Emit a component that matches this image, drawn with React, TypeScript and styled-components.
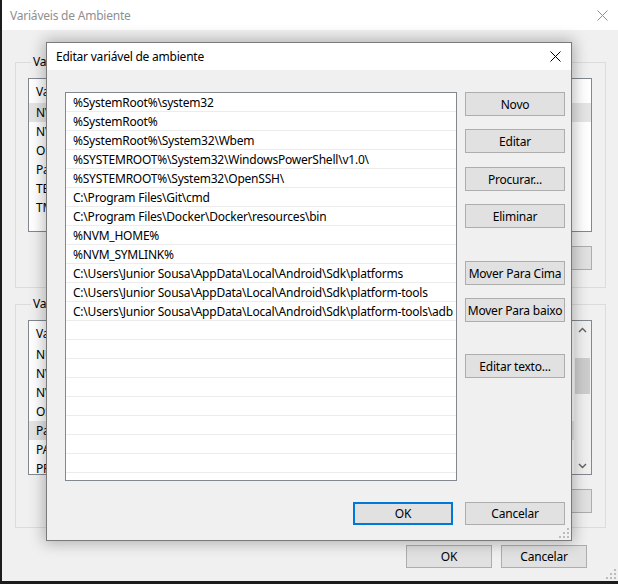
import React from 'react';
import styled, { createGlobalStyle } from 'styled-components';

const Global = createGlobalStyle`
  html, body { margin: 0; padding: 0; }
  body {
    background: #1c1c1c;
    width: 618px;
    height: 584px;
    overflow: hidden;
    font-family: "Noto Sans", "Open Sans", sans-serif;
    font-size: 12px;
    letter-spacing: -0.22px;
    color: #000;
  }
  * { box-sizing: border-box; }
`;

const Page = styled.div`
  position: relative;
  width: 618px;
  height: 584px;
  padding-left: 2px;
`;

const Window = styled.div`
  width: 616px;
  height: 581px;
  background: #f0f0f0;
  display: flex;
  flex-direction: column;
  position: relative;
`;

const TitleBar = styled.div<{ $h: number; $pl: number; $pr: number; $muted?: boolean }>`
  height: ${(p) => p.$h}px;
  flex: none;
  background: #fff;
  display: flex;
  align-items: center;
  justify-content: space-between;
  padding: 0 ${(p) => p.$pr}px 0 ${(p) => p.$pl}px;
  color: ${(p) => (p.$muted ? '#8f8f8f' : '#000')};
  font-size: 12px;
`;

const MainBody = styled.div`
  flex: 1;
  display: flex;
  flex-direction: column;
  padding: 24px 12px 0 13px;
`;

const Group = styled.fieldset<{ $mt: number; $pb: number }>`
  margin: ${(p) => p.$mt}px 0 0 0;
  padding: 8px 13px ${(p) => p.$pb}px 12px;
  border: 1px solid #dcdcdc;
  min-width: 0;
  display: flex;
  flex-direction: column;
`;

const Legend = styled.legend`
  padding: 0 2px;
  margin-left: 3px;
  line-height: 16px;
  font-size: 12px;
`;

const ListBox = styled.div<{ $h: number }>`
  height: ${(p) => p.$h}px;
  background: #fff;
  border: 1px solid #828790;
  position: relative;
  overflow: hidden;
`;

const Header = styled.div`
  height: 24px;
  display: flex;
  align-items: center;
  padding-left: 7px;
`;

const BgRow = styled.div<{ $sel?: boolean }>`
  height: 19px;
  line-height: 19px;
  padding-left: 7px;
  background: ${(p) => (p.$sel ? '#e5e5e5' : 'transparent')};
  white-space: nowrap;
`;

const GroupButtons = styled.div`
  margin-top: 14px;
  display: flex;
  justify-content: flex-end;
  gap: 9px;
`;

const Btn = styled.div<{ $w: number; $h?: number; $mt?: number; $default?: boolean }>`
  width: ${(p) => p.$w}px;
  height: ${(p) => p.$h ?? 24}px;
  margin-top: ${(p) => p.$mt ?? 0}px;
  flex: none;
  background: #e1e1e1;
  border: ${(p) => (p.$default ? '2px solid #0078d7' : '1px solid #adadad')};
  display: flex;
  align-items: center;
  justify-content: center;
  font-size: 12px;
  white-space: nowrap;
`;

const MainFooter = styled.div`
  margin-top: 17px;
  padding-right: 19px;
  display: flex;
  justify-content: flex-end;
  gap: 9px;
`;

const ScrollBar = styled.div`
  position: absolute;
  top: 0;
  right: 0;
  bottom: 0;
  width: 17px;
  background: #f0f0f0;
  display: flex;
  flex-direction: column;
  align-items: center;
`;

const ScrollArrow = styled.div`
  height: 17px;
  width: 17px;
  display: flex;
  align-items: center;
  justify-content: center;
`;

const Thumb = styled.div`
  margin-top: 20px;
  width: 15px;
  height: 36px;
  background: #cdcdcd;
`;

const Spacer = styled.div`
  flex: 1;
`;

const Grip = styled.svg`
  position: absolute;
  right: 2px;
  bottom: 2px;
`;

const Dialog = styled.div`
  position: absolute;
  left: 44px;
  top: 42px;
  width: 526px;
  height: 499px;
  background: #f0f0f0;
  border: 1px solid #7a7a7a;
  box-shadow: 0 0 14px 2px rgba(0, 0, 0, 0.28);
  display: flex;
  flex-direction: column;
`;

const DialogBody = styled.div`
  flex: 1;
  padding: 22px 6px 0 18px;
  display: flex;
  flex-direction: column;
`;

const DialogMain = styled.div`
  display: flex;
  gap: 8px;
`;

const PathList = styled.div`
  width: 392px;
  height: 389px;
  background: #fff;
  border: 1px solid #828790;
  overflow: hidden;
`;

const PathRow = styled.div`
  height: 19px;
  line-height: 19px;
  padding-left: 7px;
  border-bottom: 1px solid #ececec;
  white-space: nowrap;
`;

const ButtonColumn = styled.div`
  display: flex;
  flex-direction: column;
`;

const DialogFooter = styled.div`
  margin-top: 21px;
  display: flex;
  justify-content: flex-end;
  gap: 12px;
`;

const CloseIcon = ({ color, size }: { color: string; size: number }) => (
  <svg width={size} height={size} viewBox={`0 0 ${size} ${size}`}>
    <path d={`M0.5 0.5 L${size - 0.5} ${size - 0.5} M${size - 0.5} 0.5 L0.5 ${size - 0.5}`} stroke={color} strokeWidth="1" fill="none" />
  </svg>
);

const GripIcon = () => (
  <Grip width="10" height="10" viewBox="0 0 10 10">
    {[
      [8, 0],
      [8, 4],
      [4, 4],
      [8, 8],
      [4, 8],
      [0, 8],
    ].map(([x, y], i) => (
      <rect key={i} x={x} y={y} width="2" height="2" fill="#bcbcbc" />
    ))}
  </Grip>
);

const paths = [
  '%SystemRoot%\\system32',
  '%SystemRoot%',
  '%SystemRoot%\\System32\\Wbem',
  '%SYSTEMROOT%\\System32\\WindowsPowerShell\\v1.0\\',
  '%SYSTEMROOT%\\System32\\OpenSSH\\',
  'C:\\Program Files\\Git\\cmd',
  'C:\\Program Files\\Docker\\Docker\\resources\\bin',
  '%NVM_HOME%',
  '%NVM_SYMLINK%',
  'C:\\Users\\Junior Sousa\\AppData\\Local\\Android\\Sdk\\platforms',
  'C:\\Users\\Junior Sousa\\AppData\\Local\\Android\\Sdk\\platform-tools',
  'C:\\Users\\Junior Sousa\\AppData\\Local\\Android\\Sdk\\platform-tools\\adb',
];

const userVars = ['NVM_HOME', 'NVM_SYMLINK', 'OneDrive', 'Path', 'TEMP', 'TMP'];
const sysVars = ['NUMBER_OF_PROCESSORS', 'NVM_HOME', 'NVM_SYMLINK', 'OS', 'Path', 'PATHEXT', 'PROCESSOR_ARCHITECTURE'];

export default function App() {
  const rows = [...paths, ...Array(8).fill('')];
  return (
    <Page>
      <Global />
      <Window>
        <TitleBar $h={30} $pl={8} $pr={10} $muted>
          <span>Variáveis de Ambiente</span>
          <CloseIcon color="#8f8f8f" size={11} />
        </TitleBar>
        <MainBody>
          <Group $mt={0} $pb={17}>
            <Legend>Variáveis de usuário para Junior Sousa</Legend>
            <ListBox $h={154}>
              <Header>Variável</Header>
              {userVars.map((v, i) => (
                <BgRow key={v} $sel={i === 0}>
                  {v}
                </BgRow>
              ))}
            </ListBox>
            <GroupButtons>
              <Btn $w={86}>Novo...</Btn>
              <Btn $w={86}>Editar...</Btn>
              <Btn $w={86}>Eliminar</Btn>
            </GroupButtons>
          </Group>
          <Group $mt={8} $pb={14}>
            <Legend>Variáveis do sistema</Legend>
            <ListBox $h={155}>
              <Header>Variável</Header>
              {sysVars.map((v, i) => (
                <BgRow key={v} $sel={i === 4}>
                  {v}
                </BgRow>
              ))}
              <ScrollBar>
                <ScrollArrow>
                  <svg width="9" height="6" viewBox="0 0 9 6">
                    <path d="M1 5 L4.5 1.5 L8 5" stroke="#606060" strokeWidth="1.4" fill="none" />
                  </svg>
                </ScrollArrow>
                <Thumb />
                <Spacer />
                <ScrollArrow>
                  <svg width="9" height="6" viewBox="0 0 9 6">
                    <path d="M1 1 L4.5 4.5 L8 1" stroke="#606060" strokeWidth="1.4" fill="none" />
                  </svg>
                </ScrollArrow>
              </ScrollBar>
            </ListBox>
            <GroupButtons>
              <Btn $w={86}>Novo...</Btn>
              <Btn $w={86}>Editar...</Btn>
              <Btn $w={86}>Eliminar</Btn>
            </GroupButtons>
          </Group>
          <MainFooter>
            <Btn $w={86} $h={23}>OK</Btn>
            <Btn $w={86} $h={23}>Cancelar</Btn>
          </MainFooter>
        </MainBody>
        <GripIcon />

        <Dialog>
          <TitleBar $h={27} $pl={9} $pr={10}>
            <span>Editar variável de ambiente</span>
            <CloseIcon color="#000" size={11} />
          </TitleBar>
          <DialogBody>
            <DialogMain>
              <PathList>
                {rows.map((r, i) => (
                  <PathRow key={i}>{r}</PathRow>
                ))}
              </PathList>
              <ButtonColumn>
                <Btn $w={100}>Novo</Btn>
                <Btn $w={100} $mt={13}>Editar</Btn>
                <Btn $w={100} $mt={14}>Procurar...</Btn>
                <Btn $w={100} $mt={13}>Eliminar</Btn>
                <Btn $w={100} $mt={33}>Mover Para Cima</Btn>
                <Btn $w={100} $mt={13}>Mover Para baixo</Btn>
                <Btn $w={100} $mt={32}>Editar texto...</Btn>
              </ButtonColumn>
            </DialogMain>
            <DialogFooter>
              <Btn $w={100} $h={23} $default>OK</Btn>
              <Btn $w={100} $h={23}>Cancelar</Btn>
            </DialogFooter>
          </DialogBody>
          <GripIcon />
        </Dialog>
      </Window>
    </Page>
  );
}
